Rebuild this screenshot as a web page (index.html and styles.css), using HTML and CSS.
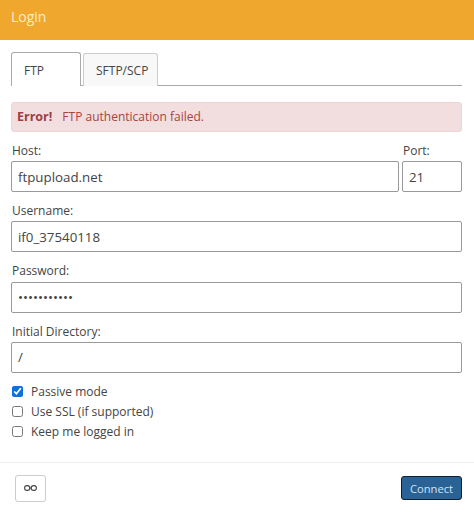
FILE: index.html
```html
<!DOCTYPE html>
<html lang="en">
<head>
  <meta charset="UTF-8" />
  <title>Login</title>
  <link rel="stylesheet" href="styles.css">
</head>
<body>
  <div class="header">Login</div>

  <div class="content">
    <div class="tabs">
      <div class="tab active">FTP</div>
      <div class="tab">SFTP/SCP</div>
    </div>

    <div class="alert"><strong>Error!</strong><span>FTP authentication failed.</span></div>

    <div class="row">
      <div class="field grow">
        <label for="host">Host:</label>
        <input type="text" id="host" value="ftpupload.net" />
      </div>
      <div class="field port">
        <label for="port">Port:</label>
        <input type="text" id="port" value="21" />
      </div>
    </div>

    <div class="field">
      <label for="username">Username:</label>
      <input type="text" id="username" value="if0_37540118" />
    </div>

    <div class="field">
      <label for="password">Password:</label>
      <input type="password" id="password" value="12345678901" />
    </div>

    <div class="field">
      <label for="directory">Initial Directory:</label>
      <input type="text" id="directory" value="/" />
    </div>

    <div class="checks">
      <label class="check"><input type="checkbox" checked /> <span>Passive mode</span></label>
      <label class="check"><input type="checkbox" /> <span>Use SSL (if supported)</span></label>
      <label class="check"><input type="checkbox" /> <span>Keep me logged in</span></label>
    </div>
  </div>

  <div class="footer">
    <button class="btn icon-btn" aria-label="Link">
      <svg width="13" height="6" viewBox="0 0 13 6" fill="none" stroke="#444" stroke-width="1.1">
        <rect x="0.6" y="0.6" width="5.2" height="4.8" rx="2.4" />
        <rect x="7.2" y="0.6" width="5.2" height="4.8" rx="2.4" />
        <path d="M5.8 3h1.4" />
      </svg>
    </button>
    <button class="btn connect">Connect</button>
  </div>
</body>
</html>
```

FILE: styles.css
```css
* {
  box-sizing: border-box;
  font-family: 'Open Sans', sans-serif;
}
body {
  margin: 0;
  background: #fff;
  color: #444;
  font-size: 12px;
}
.header {
  height: 40px;
  padding: 0 11px;
  background: #f0a72e;
  color: #fdeccb;
  font-size: 14px;
  line-height: 34px;
}
.content {
  padding: 12px 12px 0 11px;
}
.tabs {
  display: flex;
  gap: 2px;
  height: 34px;
  border-bottom: 1px solid #aaa;
}
.tab {
  width: 75px;
  height: 33px;
  margin-top: 1px;
  padding: 0 12px;
  background: #f8f8f8;
  border: 1px solid #ccc;
  border-bottom: none;
  border-radius: 3px 3px 0 0;
  font-size: 12px;
  line-height: 34px;
  white-space: nowrap;
}
.tab.active {
  width: 70px;
  height: 34px;
  margin-top: 0;
  background: #fff;
  border-color: #aaa;
  line-height: 35px;
}
.alert {
  display: flex;
  gap: 10px;
  height: 30px;
  margin-top: 16px;
  padding: 0 5px;
  background: #f2dede;
  border: 1px solid #ebd5d8;
  border-radius: 3px;
  color: #a94442;
  font-size: 12px;
  line-height: 28px;
}
.alert strong {
  font-weight: 700;
  font-size: 12.5px;
  color: #9c3f45;
}
.row {
  display: flex;
  gap: 3px;
}
.grow {
  flex: 1;
}
.port {
  width: 60px;
}
.field {
  margin-top: 10px;
}
.field label {
  display: block;
  height: 19.2px;
  padding-left: 1px;
  font-size: 12px;
  line-height: 18px;
}
.field input {
  display: block;
  width: 100%;
  height: 31px;
  padding: 0 6px;
  background: #fff;
  border: 1px solid #999;
  border-radius: 2px;
  color: #444;
  font-size: 13.3px;
  outline: none;
}
.checks {
  margin-top: 9.2px;
}
.check {
  display: flex;
  align-items: center;
  height: 20px;
  font-size: 12px;
}
.check input {
  width: 11px;
  height: 11px;
  margin: 0 8px 0 1px;
  accent-color: #0d6fe0;
}
.footer {
  display: flex;
  justify-content: space-between;
  align-items: center;
  height: 52px;
  margin-top: 20px;
  padding: 0 12px 0 15px;
  border-top: 1px solid #eee;
}
.btn {
  border-radius: 3px;
  font-size: 12px;
  padding: 0;
}
.icon-btn {
  display: flex;
  align-items: center;
  justify-content: center;
  width: 31px;
  height: 27px;
  background: #fff;
  border: 1px solid #ccc;
}
.connect {
  width: 61px;
  height: 24px;
  background: #2b6295;
  border: 1px solid #111c30;
  color: #cfe3f5;
  font-size: 11.2px;
}
```
